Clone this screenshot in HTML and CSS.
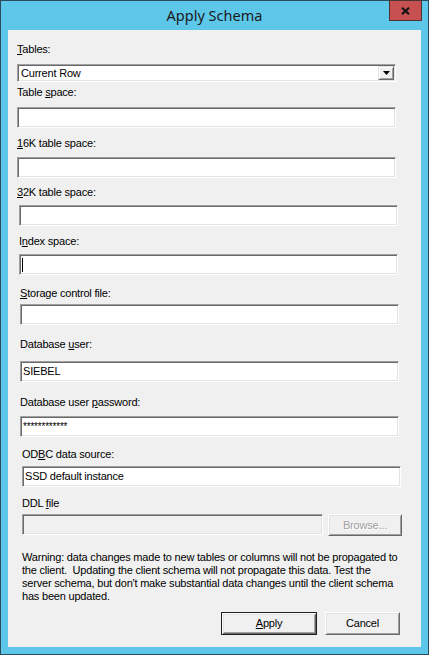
FILE: index.html
```html
<!DOCTYPE html>
<html lang="en">
<head>
<meta charset="utf-8">
<title>Apply Schema</title>
<link rel="stylesheet" href="styles.css">
</head>
<body>
<div class="window">
  <div class="titlebar">
    <span class="title">Apply Schema</span>
    <div class="close" aria-label="Close">
      <svg width="9" height="8" viewBox="0 0 9 8"><path d="M1 0.8 L8 7.2 M8 0.8 L1 7.2" stroke="#141414" stroke-width="2.2" fill="none"/></svg>
    </div>
  </div>
  <div class="client">
    <div class="field f-tables">
      <div class="label"><u>T</u>ables:</div>
      <div class="combo">
        <span class="combo-text">Current Row</span>
        <span class="drop"><svg width="7" height="4" viewBox="0 0 7 4"><polygon points="0,0 7,0 3.5,4" fill="#000"/></svg></span>
      </div>
    </div>
    <div class="field f-tablespace">
      <div class="label">Table <u>s</u>pace:</div>
      <div class="edit"></div>
    </div>
    <div class="field f-16k">
      <div class="label"><u>1</u>6K table space:</div>
      <div class="edit"></div>
    </div>
    <div class="field f-32k">
      <div class="label"><u>3</u>2K table space:</div>
      <div class="edit"></div>
    </div>
    <div class="field f-index">
      <div class="label">I<u>n</u>dex space:</div>
      <div class="edit"><span class="caret"></span></div>
    </div>
    <div class="field f-storage">
      <div class="label"><u>S</u>torage control file:</div>
      <div class="edit"></div>
    </div>
    <div class="field f-user">
      <div class="label">Database <u>u</u>ser:</div>
      <div class="edit">SIEBEL</div>
    </div>
    <div class="field f-password">
      <div class="label">Database user <u>p</u>assword:</div>
      <div class="edit"><span class="mask">************</span></div>
    </div>
    <div class="field f-odbc">
      <div class="label">OD<u>B</u>C data source:</div>
      <div class="edit">SSD default instance</div>
    </div>
    <div class="field f-ddl">
      <div class="label">DDL <u>f</u>ile</div>
      <div class="ddl-row">
        <div class="edit edit-disabled"></div>
        <button class="btn btn-disabled" disabled>Browse...</button>
      </div>
    </div>
    <p class="warning">Warning: data changes made to new tables or columns will not be propagated to<br>the client.&nbsp; Updating the client schema will not propagate this data. Test the<br>server schema, but don't make substantial data changes until the client schema<br>has been updated.</p>
    <div class="buttons">
      <button class="btn btn-default btn-apply"><u>A</u>pply</button>
      <button class="btn btn-cancel">Cancel</button>
    </div>
  </div>
</div>
</body>
</html>
```
FILE: styles.css
```css
* { box-sizing: border-box; }

html, body {
  margin: 0;
  padding: 0;
}

body {
  width: 429px;
  height: 655px;
  overflow: hidden;
  background: #5dc7ea;
  font-family: "Liberation Sans", Arial, sans-serif;
}

.window {
  position: relative;
  width: 429px;
  height: 655px;
  border: 1px solid #2b4c5c;
  background: #5dc7ea;
  display: flex;
  flex-direction: column;
}

.titlebar {
  height: 29px;
  flex: none;
  display: flex;
  align-items: center;
  justify-content: center;
  padding-bottom: 2px;
}

.title {
  font-family: "Noto Sans", "Open Sans", sans-serif;
  font-size: 14.5px;
  color: #1a1a1a;
}

.close {
  position: absolute;
  top: -1px;
  left: 388px;
  width: 33px;
  height: 21px;
  background: #c75050;
  border: 1px solid #4a3434;
  display: flex;
  align-items: center;
  justify-content: center;
  padding-top: 1px;
}

.close svg { display: block; }

.client {
  flex: 1;
  margin: 0 7px 7px 7px;
  background: #f0f0f0;
  padding: 13px 0 0 9px;
  font-size: 11px;
  letter-spacing: -0.2px;
  color: #000;
}

.label {
  height: 13px;
  line-height: 13px;
  white-space: nowrap;
}

u { text-decoration: underline; text-underline-offset: 1px; }

.edit {
  width: 379px;
  height: 21px;
  background: #fff;
  border: 1px solid;
  border-color: #a0a0a0 #ffffff #ffffff #a0a0a0;
  box-shadow: inset 1px 1px 0 #696969, inset -1px -1px 0 #e3e3e3;
  padding-left: 2px;
  line-height: 19px;
  display: flex;
  align-items: center;
  white-space: nowrap;
}

.edit-disabled {
  background: #f0f0f0;
  width: 301px;
}

.caret {
  display: block;
  width: 1px;
  height: 14px;
  background: #000;
}

.mask {
  font-size: 10px;
}

.combo {
  width: 379px;
  height: 18px;
  background: #fff;
  border: 1px solid;
  border-color: #a0a0a0 #ffffff #ffffff #a0a0a0;
  box-shadow: inset 1px 1px 0 #696969, inset -1px -1px 0 #e3e3e3;
  padding: 1px;
  display: flex;
  align-items: center;
}

.combo-text {
  margin-left: 2px;
  line-height: 14px;
}

.drop {
  margin-left: auto;
  width: 16px;
  height: 14px;
  background: #f0f0f0;
  border: 1px solid;
  border-color: #e3e3e3 #696969 #696969 #e3e3e3;
  box-shadow: inset 1px 1px 0 #fff, inset -1px -1px 0 #a0a0a0;
  display: flex;
  align-items: center;
  justify-content: center;
}

.drop svg { display: block; }

/* per-field placement (dialog-unit layout) */
.f-tables .combo { margin-top: 8px; }

.f-tablespace { margin-top: 4px; }
.f-tablespace .edit { margin-top: 8px; }

.f-16k { margin-top: 9px; }
.f-16k .edit { margin-top: 7px; }

.f-32k { margin-top: 8px; }
.f-32k .edit { margin-top: 6px; margin-left: 2px; }

.f-index { margin-top: 9px; }
.f-index .label { margin-left: 2px; }
.f-index .edit { margin-top: 6px; margin-left: 2px; }

.f-storage { margin-top: 12px; margin-left: 3px; }
.f-storage .edit { margin-top: 4px; }

.f-user { margin-top: 13px; margin-left: 3px; }
.f-user .edit { margin-top: 10px; }

.f-password { margin-top: 14px; margin-left: 3px; }
.f-password .edit { margin-top: 7px; }

.f-odbc { margin-top: 11px; margin-left: 5px; }
.f-odbc .edit { margin-top: 5px; }

.f-ddl { margin-top: 10px; margin-left: 5px; }

.ddl-row {
  margin-top: 4px;
  display: flex;
  align-items: flex-start;
  gap: 5px;
}

.warning {
  margin: 15px 0 0 5px;
  line-height: 13px;
  white-space: nowrap;
}

.buttons {
  margin-top: 9px;
  margin-right: 21px;
  display: flex;
  justify-content: flex-end;
  gap: 8px;
}

.btn {
  height: 23px;
  padding: 0 0 1px 0;
  margin: 0;
  font-family: "Liberation Sans", Arial, sans-serif;
  font-size: 11px;
  letter-spacing: -0.2px;
  color: #000;
  background: #f0f0f0;
  border: 1px solid;
  border-color: #ffffff #696969 #696969 #ffffff;
  box-shadow: inset 1px 1px 0 #e3e3e3, inset -1px -1px 0 #a0a0a0;
  display: flex;
  align-items: center;
  justify-content: center;
  border-radius: 0;
}

.btn-default {
  border-color: #1e1e1e;
  box-shadow: inset 1px 1px 0 #fff, inset -1px -1px 0 #696969, inset 2px 2px 0 #e3e3e3, inset -2px -2px 0 #a0a0a0;
}

.btn-apply { width: 96px; }
.btn-cancel { width: 75px; }

.btn-disabled {
  width: 74px;
  height: 22px;
  color: #a0a0a0;
  text-shadow: 1px 1px 0 #fff;
}
```
